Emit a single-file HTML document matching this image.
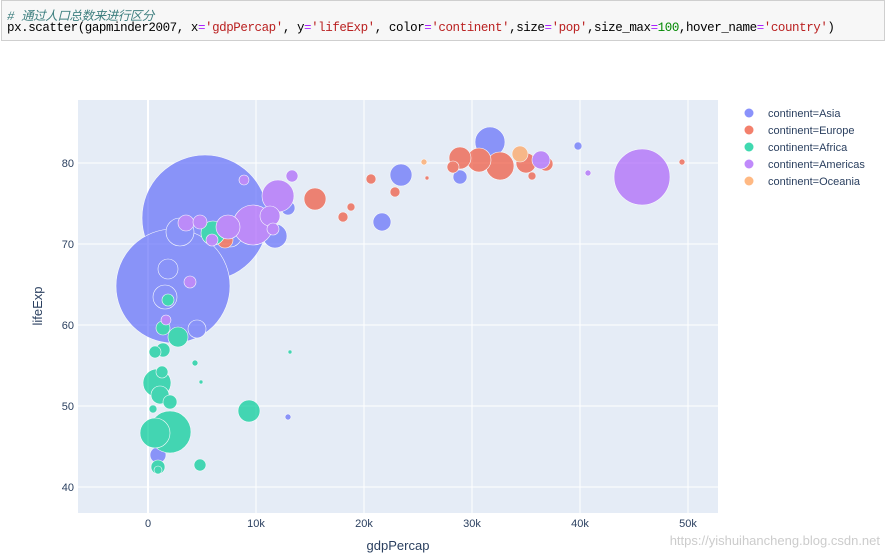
<!DOCTYPE html>
<html><head><meta charset="utf-8"><style>
body{margin:0;width:885px;height:558px;background:#fff;overflow:hidden;font-family:"Liberation Sans",sans-serif}
.cell{position:absolute;left:1px;top:0;width:882px;height:39px;background:#f7f7f7;border:1px solid #cfcfcf;font-family:"Liberation Mono","Noto Sans CJK SC",monospace;font-size:12.5px;letter-spacing:-0.43px}
.l1{position:absolute;left:5px;top:4px;color:#408080;font-style:italic}
.l2{position:absolute;left:5px;top:20px;color:#000}
.s{color:#ba2121}.o{color:#aa22ff}.n{color:#080}
</style></head><body>
<div class="cell"><div class="l1"># 通过人口总数来进行区分</div>
<div class="l2">px.scatter(gapminder2007, x<span class="o">=</span><span class="s">'gdpPercap'</span>, y<span class="o">=</span><span class="s">'lifeExp'</span>, color<span class="o">=</span><span class="s">'continent'</span>,size<span class="o">=</span><span class="s">'pop'</span>,size_max<span class="o">=</span><span class="n">100</span>,hover_name<span class="o">=</span><span class="s">'country'</span>)</div></div>
<svg width="885" height="558" style="position:absolute;left:0;top:0" font-family="Liberation Sans,sans-serif">
<rect x="78" y="100" width="640" height="413" fill="#e5ecf6"/>
<g stroke="#fff" stroke-width="1">
<line x1="148" y1="100" x2="148" y2="513" stroke-width="2"/>
<line x1="256" y1="100" x2="256" y2="513"/><line x1="364" y1="100" x2="364" y2="513"/><line x1="472" y1="100" x2="472" y2="513"/><line x1="580" y1="100" x2="580" y2="513"/><line x1="688" y1="100" x2="688" y2="513"/>
<line x1="78" y1="487" x2="718" y2="487"/><line x1="78" y1="406" x2="718" y2="406"/><line x1="78" y1="325" x2="718" y2="325"/><line x1="78" y1="244" x2="718" y2="244"/><line x1="78" y1="163" x2="718" y2="163"/>
</g>
<g font-size="11" fill="#2a3f5f" text-anchor="middle">
<text x="148" y="527">0</text><text x="256" y="527">10k</text><text x="364" y="527">20k</text><text x="472" y="527">30k</text><text x="580" y="527">40k</text><text x="688" y="527">50k</text>
<text x="398" y="550" font-size="13">gdpPercap</text>
</g>
<g font-size="11" fill="#2a3f5f" text-anchor="end">
<text x="74" y="491">40</text><text x="74" y="410">50</text><text x="74" y="329">60</text><text x="74" y="248">70</text><text x="74" y="167">80</text>
</g>
<text x="42" y="306" font-size="13" fill="#2a3f5f" text-anchor="middle" transform="rotate(-90 42 306)">lifeExp</text>
<g stroke="#fff" stroke-width="0.6" opacity="0.7">
<g fill="#636efa">
<circle cx="205" cy="218" r="63"/><circle cx="173" cy="286" r="57"/>
<circle cx="490" cy="142" r="15"/><circle cx="401" cy="175" r="11"/><circle cx="382" cy="222" r="9"/>
<circle cx="275" cy="236" r="12"/><circle cx="197" cy="329" r="9"/><circle cx="165" cy="297" r="12"/>
<circle cx="180" cy="232" r="14"/><circle cx="230" cy="235" r="12"/><circle cx="460" cy="177" r="7"/>
<circle cx="578" cy="146" r="4"/><circle cx="658" cy="164" r="3"/><circle cx="288" cy="208" r="7"/>
<circle cx="168" cy="269" r="10"/><circle cx="158" cy="455" r="8"/><circle cx="288" cy="417" r="3"/>
</g>
<g fill="#EF553B">
<circle cx="500" cy="166" r="14"/><circle cx="479" cy="160" r="12"/><circle cx="460" cy="158" r="11"/><circle cx="526" cy="163" r="10"/>
<circle cx="546" cy="164" r="7"/><circle cx="315" cy="199" r="11"/><circle cx="395" cy="192" r="5"/><circle cx="371" cy="179" r="5"/>
<circle cx="343" cy="217" r="5"/><circle cx="351" cy="207" r="4"/><circle cx="682" cy="162" r="3"/><circle cx="532" cy="176" r="4"/>
<circle cx="453" cy="167" r="6"/><circle cx="427" cy="178" r="2"/><circle cx="225" cy="240" r="8"/>
</g>
<g fill="#00cc96">
<circle cx="170" cy="432" r="21"/><circle cx="155" cy="433" r="15"/><circle cx="157" cy="383" r="14"/><circle cx="249" cy="411" r="11"/>
<circle cx="178" cy="337" r="10"/><circle cx="213" cy="233" r="12"/><circle cx="160" cy="395" r="9"/><circle cx="163" cy="350" r="7"/>
<circle cx="158" cy="467" r="7"/><circle cx="200" cy="465" r="6"/><circle cx="163" cy="328" r="7"/><circle cx="170" cy="402" r="7"/>
<circle cx="155" cy="352" r="6"/><circle cx="168" cy="300" r="6"/><circle cx="162" cy="372" r="6"/><circle cx="158" cy="470" r="4"/>
<circle cx="153" cy="409" r="4"/><circle cx="290" cy="352" r="2"/><circle cx="201" cy="382" r="2"/><circle cx="195" cy="363" r="3"/>
</g>
<g fill="#ab63fa">
<circle cx="642" cy="177" r="28"/><circle cx="253" cy="225" r="20"/><circle cx="278" cy="196" r="16"/><circle cx="228" cy="227" r="12"/>
<circle cx="270" cy="216" r="10"/><circle cx="292" cy="176" r="6"/><circle cx="244" cy="180" r="5"/><circle cx="186" cy="223" r="8"/>
<circle cx="200" cy="222" r="7"/><circle cx="190" cy="282" r="6"/><circle cx="166" cy="320" r="5"/><circle cx="541" cy="160" r="9"/>
<circle cx="212" cy="240" r="6"/><circle cx="273" cy="229" r="6"/><circle cx="588" cy="173" r="3"/>
</g>
<g fill="#FFA15A"><circle cx="520" cy="154" r="8"/><circle cx="424" cy="162" r="3"/></g>
</g>
<g font-size="11" fill="#2a3f5f">
<circle cx="749" cy="113" r="4.5" fill="#636efa" opacity="0.75"/><text x="768" y="117">continent=Asia</text>
<circle cx="749" cy="130" r="4.5" fill="#EF553B" opacity="0.75"/><text x="768" y="134">continent=Europe</text>
<circle cx="749" cy="147" r="4.5" fill="#00cc96" opacity="0.75"/><text x="768" y="151">continent=Africa</text>
<circle cx="749" cy="164" r="4.5" fill="#ab63fa" opacity="0.75"/><text x="768" y="168">continent=Americas</text>
<circle cx="749" cy="181" r="4.5" fill="#FFA15A" opacity="0.75"/><text x="768" y="185">continent=Oceania</text>
</g>
<text x="880" y="545" font-size="13" fill="#ccc" text-anchor="end">https://yishuihancheng.blog.csdn.net</text>
</svg>
</body></html>
